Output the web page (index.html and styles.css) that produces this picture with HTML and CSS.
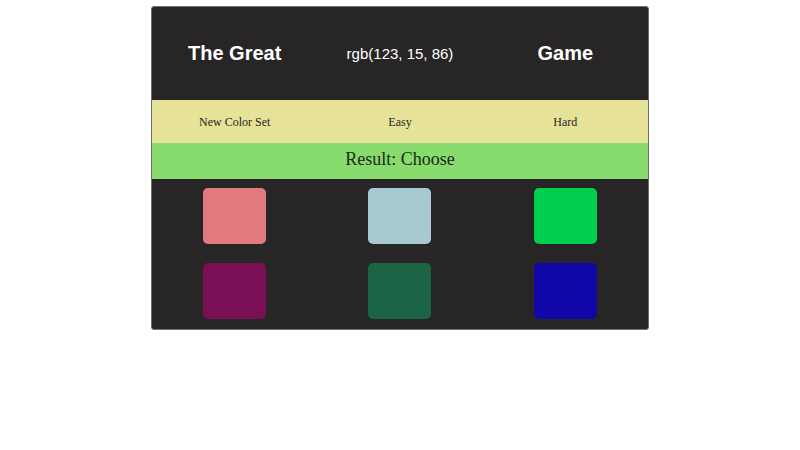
FILE: index.html
```html
<!DOCTYPE html>
<html lang="en">
<head>
    <meta charset="UTF-8">
    <meta name="viewport" content="width=device-width, initial-scale=1.0">
    <title>The Great RGB Game</title>
    <link rel="stylesheet" href="styles.css">
</head>
<body>
    <div class="game">
        <div class="header">
            <h1>The Great</h1>
            <span class="rgb" id="rgb">rgb(123, 15, 86)</span>
            <h1>Game</h1>
        </div>

        <div class="controls">
            <button id="reset">New Color Set</button>
            <button id="easy">Easy</button>
            <button id="hard">Hard</button>
        </div>

        <div class="result" id="result">Result: Choose</div>

        <div class="board">
            <div class="square" style="background: rgb(224, 122, 125)"></div>
            <div class="square" style="background: rgb(166, 201, 210)"></div>
            <div class="square" style="background: rgb(0, 207, 77)"></div>
            <div class="square" style="background: rgb(123, 15, 86)"></div>
            <div class="square" style="background: rgb(28, 100, 70)"></div>
            <div class="square" style="background: rgb(17, 6, 166)"></div>
        </div>
    </div>
</body>
</html>
```

FILE: styles.css
```css
body {
    margin: 0;
    background: #fff;
}
.game {
    width: 498px;
    box-sizing: border-box;
    margin: 6px auto 0;
    background: #272526;
    border: 1px solid #6f6f6f;
    border-radius: 3px;
    overflow: hidden;
}
.header {
    display: grid;
    grid-template-columns: repeat(3, 1fr);
    align-items: center;
    height: 93px;
    color: #fff;
    font-family: "Liberation Sans", Arial, sans-serif;
    text-align: center;
}
.header h1 {
    margin: 0;
    font-size: 20px;
    font-weight: bold;
}
.rgb {
    font-size: 15px;
}
.controls {
    display: grid;
    grid-template-columns: repeat(3, 1fr);
    height: 43px;
    background: #e6e398;
}
.controls button {
    background: none;
    border: none;
    padding-top: 2px;
    font-family: "Liberation Serif", "Times New Roman", serif;
    font-size: 12px;
    color: #1f1f1f;
    cursor: pointer;
}
.result {
    height: 36px;
    line-height: 33px;
    background: #88db6d;
    text-align: center;
    font-family: "Liberation Serif", "Times New Roman", serif;
    font-size: 18px;
    color: #1b2a17;
}
.board {
    display: grid;
    grid-template-columns: repeat(3, 1fr);
    row-gap: 19px;
    justify-items: center;
    padding: 9px 0 10px;
}
.square {
    width: 63px;
    height: 56px;
    border-radius: 5px;
}
```
